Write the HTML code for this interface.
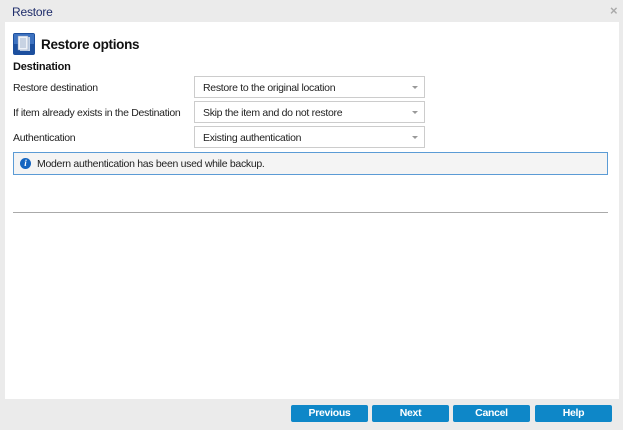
<!DOCTYPE html>
<html><head><style>
*{margin:0;padding:0;box-sizing:border-box}
body{width:623px;height:430px;background:#ebebeb;font-family:"Liberation Sans",Arial,sans-serif;font-size:10.5px;letter-spacing:-0.3px;color:#222;position:relative;overflow:hidden}
.title{position:absolute;left:12px;top:5px;font-size:12px;color:#1f2d6b;letter-spacing:-0.2px}
.x{position:absolute;left:610px;top:3px;color:#aaa;font-size:13px;font-weight:bold}
.main{position:absolute;left:5px;top:22px;width:614px;height:377px;background:#fff}
.h1{position:absolute;left:41px;top:37px;font-size:13.5px;font-weight:bold;color:#111;letter-spacing:-0.3px}
.h2{position:absolute;left:13px;top:61px;font-size:11px;font-weight:bold;color:#111;letter-spacing:-0.2px}
.lbl{position:absolute;left:13px;color:#222}
.sel{position:absolute;left:194px;width:231px;height:22px;border:1px solid #ccc;background:#fff;padding:5px 0 0 8px}
.sel:after{content:"";position:absolute;right:6px;top:9px;border-left:3.5px solid transparent;border-right:3.5px solid transparent;border-top:3.5px solid #999}
.info{position:absolute;left:13px;top:152px;width:595px;height:23px;border:1px solid #5b9bd5;background:#f4f4f4;padding:5px 0 0 23px}
.info i{position:absolute;left:6px;top:5px;width:11px;height:11px;border-radius:50%;background:#1565c0;color:#fff;font-size:9px;font-weight:bold;text-align:center;line-height:11px;font-family:"Liberation Serif",serif;letter-spacing:0}
.line{position:absolute;left:13px;top:212px;width:595px;height:1px;background:#aaa}
.btn{position:absolute;top:405px;width:77px;height:17px;background:#0e87c8;color:#fff;font-weight:bold;font-size:10.5px;text-align:center;line-height:17px;border-radius:2px}
</style></head><body>
<div class="title">Restore</div>
<div class="x">×</div>
<div class="main"></div>
<svg style="position:absolute;left:13px;top:33px" width="22" height="22" viewBox="0 0 22 22">
<rect width="22" height="22" rx="2" fill="#1c4f9e"/>
<rect x="1" y="1" width="20" height="10" fill="#3d72c0"/>
<rect x="7" y="4" width="10" height="14" fill="#c9d6e8"/>
<rect x="5" y="3" width="10" height="14" fill="#eef2f8" stroke="#7e93b5" stroke-width=".5"/>
<path d="M7 6h6M7 8h6M7 10h6M7 12h6M7 14h6" stroke="#8aa0c0" stroke-width=".8"/>
</svg>
<div class="h1">Restore options</div>
<div class="h2">Destination</div>
<div class="lbl" style="top:82px">Restore destination</div>
<div class="lbl" style="top:107px">If item already exists in the Destination</div>
<div class="lbl" style="top:132px">Authentication</div>
<div class="sel" style="top:76px">Restore to the original location</div>
<div class="sel" style="top:101px">Skip the item and do not restore</div>
<div class="sel" style="top:126px">Existing authentication</div>
<div class="info"><i>i</i>Modern authentication has been used while backup.</div>
<div class="line"></div>
<div class="btn" style="left:291px">Previous</div>
<div class="btn" style="left:372px">Next</div>
<div class="btn" style="left:453px">Cancel</div>
<div class="btn" style="left:535px">Help</div>
</body></html>
